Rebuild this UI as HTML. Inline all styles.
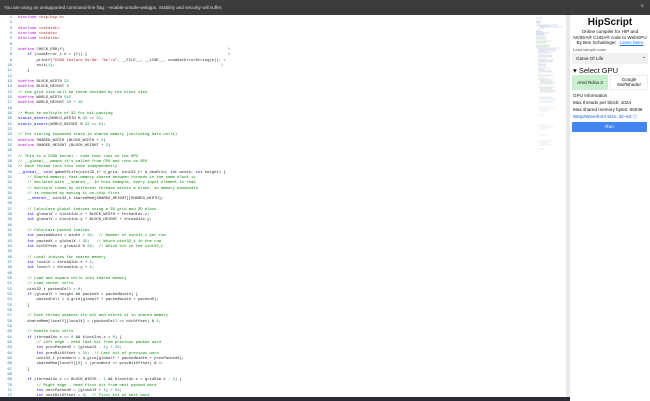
<!DOCTYPE html>
<html><head><style>
*{margin:0;padding:0;box-sizing:border-box}
body{width:650px;height:401px;overflow:hidden;background:#fff;font-family:"Liberation Sans",sans-serif;position:relative}
#top{position:absolute;left:0;top:0;width:650px;height:15px;background:#3c3c3c;color:#ddd;font-size:4.6px;line-height:15px;padding-left:4px}
#top .x{position:absolute;right:6px;top:0;color:#bbb;font-size:6px}
#ed{position:absolute;left:0;top:15px;width:566px;height:382px;background:#fff;overflow:hidden}
#code{position:absolute;left:0;top:1px;font-family:"Liberation Mono",monospace;font-size:3.85px;line-height:5.33px;white-space:pre;color:#222}
.ln{display:inline-block;width:12px;text-align:right;color:#237893;margin-right:6px}
.k{color:#0000ff}.c{color:#008000}.s{color:#a31515}.p{color:#af00db}.m{color:#098658}
#mm{position:absolute;left:535px;top:15px;width:30px;height:382px;opacity:.55}
#sb{position:absolute;left:566px;top:15px;width:4px;height:382px;background:#e8e8e8}
#bot{position:absolute;left:0;top:397px;width:570px;height:4px;background:#2b2b33}
#side{position:absolute;left:570px;top:15px;width:80px;height:386px;background:#fff;text-align:center;color:#111}
h1{font-size:10px;font-weight:bold;margin-top:2px;line-height:12px}
.sub{font-size:4.6px;line-height:5.6px}
.sub a{color:#1a73e8;text-decoration:underline}
.lbl{font-size:4px;color:#555;text-align:left;padding-left:3px;margin-top:1px}
.sel{margin:1px 2px 0 2px;height:11px;background:#f1f1f1;font-size:4.6px;line-height:11px;text-align:left;padding-left:4px;position:relative}
.sel:after{content:"⌄";position:absolute;right:2px;top:-1px;font-size:5px}
h2{font-size:7.5px;font-weight:normal;text-align:left;padding-left:3px;margin-top:2px;line-height:9px}
.btns{display:flex;gap:2px;margin:0 2px}
.btns div{height:15px;font-size:4.6px;display:flex;align-items:center;justify-content:center;line-height:5.5px}
.g{background:#c8f0cf;width:37px}
.w{background:#fff;width:39px;border:1px solid #eee}
.info{text-align:left;padding-left:3px;font-size:4.6px;line-height:7px;margin-top:2px}
.info .b{color:#1a5fd0}
.run{margin:2px 3px 0 2px;height:10px;background:#4285f4;color:#fff;font-size:4.6px;line-height:10px;border-radius:1px}
</style></head><body>
<div id="top">You are using an unsupported command-line flag: --enable-unsafe-webgpu. Stability and security will suffer.<span class="x">×</span></div>
<div id="ed"><div id="code"><span class="ln">1</span><span class="p">#include</span> <span class="s">&lt;hip/hip.h&gt;</span>
<span class="ln">2</span>
<span class="ln">3</span><span class="p">#include</span> <span class="s">&lt;cstdint&gt;</span>
<span class="ln">4</span><span class="p">#include</span> <span class="s">&lt;cstdio&gt;</span>
<span class="ln">5</span><span class="p">#include</span> <span class="s">&lt;cstdlib&gt;</span>
<span class="ln">6</span>
<span class="ln">7</span><span class="p">#define</span> CHECK_ERR(f)                                                                       \
<span class="ln">8</span>    <span class="k">if</span> (cudaError_t e = (f)) {                                                             \
<span class="ln">9</span>        printf(<span class="s">"CUDA failure %s:%d: '%s'\n"</span>, __FILE__, __LINE__, cudaGetErrorString(e)); \
<span class="ln">10</span>        exit(<span class="m">1</span>);                                                                        \
<span class="ln">11</span>    }
<span class="ln">12</span>
<span class="ln">13</span><span class="p">#define</span> BLOCK_WIDTH <span class="m">32</span>
<span class="ln">14</span><span class="p">#define</span> BLOCK_HEIGHT <span class="m">8</span>
<span class="ln">15</span><span class="c">// the grid size will be these divided by the block size</span>
<span class="ln">16</span><span class="p">#define</span> WORLD_WIDTH <span class="m">512</span>
<span class="ln">17</span><span class="p">#define</span> WORLD_HEIGHT <span class="m">32</span> * <span class="m">16</span>
<span class="ln">18</span>
<span class="ln">19</span><span class="c">// Must be multiple of 32 for bit-packing</span>
<span class="ln">20</span><span class="k">static_assert</span>(WORLD_WIDTH % <span class="m">32</span> == <span class="m">0</span>);
<span class="ln">21</span><span class="k">static_assert</span>(WORLD_HEIGHT % <span class="m">32</span> == <span class="m">0</span>);
<span class="ln">22</span>
<span class="ln">23</span><span class="c">// For storing expanded state in shared memory (including halo cells)</span>
<span class="ln">24</span><span class="p">#define</span> SHARED_WIDTH (BLOCK_WIDTH + <span class="m">2</span>)
<span class="ln">25</span><span class="p">#define</span> SHARED_HEIGHT (BLOCK_HEIGHT + <span class="m">2</span>)
<span class="ln">26</span>
<span class="ln">27</span><span class="c">// This is a CUDA kernel - code that runs on the GPU</span>
<span class="ln">28</span><span class="c">// __global__ means it's called from CPU and runs on GPU</span>
<span class="ln">29</span><span class="c">// Each thread runs this code independently</span>
<span class="ln">30</span><span class="k">__global__</span> <span class="k">void</span> gameOfLife(uint32_t* d_grid, uint32_t* d_newGrid, <span class="k">int</span> width, <span class="k">int</span> height) {
<span class="ln">31</span>    <span class="c">// Shared memory: fast memory shared between threads in the same block is</span>
<span class="ln">32</span>    <span class="c">// declared with __shared__. In this example, every input element is read</span>
<span class="ln">33</span>    <span class="c">// multiple times by different threads within a block, so memory bandwidth</span>
<span class="ln">34</span>    <span class="c">// is reduced by moving it on-chip first</span>
<span class="ln">35</span>    <span class="k">__shared__</span> uint32_t sharedMem[SHARED_HEIGHT][SHARED_WIDTH];
<span class="ln">36</span>
<span class="ln">37</span>    <span class="c">// Calculate global indices using a 2D grid and 2D block</span>
<span class="ln">38</span>    <span class="k">int</span> globalX = blockIdx.x * BLOCK_WIDTH + threadIdx.x;
<span class="ln">39</span>    <span class="k">int</span> globalY = blockIdx.y * BLOCK_HEIGHT + threadIdx.y;
<span class="ln">40</span>
<span class="ln">41</span>    <span class="c">// Calculate packed indices</span>
<span class="ln">42</span>    <span class="k">int</span> packedWidth = width / <span class="m">32</span>;  <span class="c">// Number of uint32_t per row</span>
<span class="ln">43</span>    <span class="k">int</span> packedX = globalX / <span class="m">32</span>;   <span class="c">// Which uint32_t in the row</span>
<span class="ln">44</span>    <span class="k">int</span> bitOffset = globalX % <span class="m">32</span>;  <span class="c">// Which bit in the uint32_t</span>
<span class="ln">45</span>
<span class="ln">46</span>    <span class="c">// Local indices for shared memory</span>
<span class="ln">47</span>    <span class="k">int</span> localX = threadIdx.x + <span class="m">1</span>;
<span class="ln">48</span>    <span class="k">int</span> localY = threadIdx.y + <span class="m">1</span>;
<span class="ln">49</span>
<span class="ln">50</span>    <span class="c">// Load and unpack cells into shared memory</span>
<span class="ln">51</span>    <span class="c">// Load center cells</span>
<span class="ln">52</span>    uint32_t packedCell = <span class="m">0</span>;
<span class="ln">53</span>    <span class="k">if</span> (globalY &lt; height &amp;&amp; packedX &lt; packedWidth) {
<span class="ln">54</span>        packedCell = d_grid[globalY * packedWidth + packedX];
<span class="ln">55</span>    }
<span class="ln">56</span>
<span class="ln">57</span>    <span class="c">// Each thread unpacks its bit and stores it in shared memory</span>
<span class="ln">58</span>    sharedMem[localY][localX] = (packedCell &gt;&gt; bitOffset) &amp; <span class="m">1</span>;
<span class="ln">59</span>
<span class="ln">60</span>    <span class="c">// Handle halo cells</span>
<span class="ln">61</span>    <span class="k">if</span> (threadIdx.x == <span class="m">0</span> &amp;&amp; blockIdx.x &gt; <span class="m">0</span>) {
<span class="ln">62</span>        <span class="c">// Left edge - need last bit from previous packed word</span>
<span class="ln">63</span>        <span class="k">int</span> prevPackedX = (globalX - <span class="m">1</span>) / <span class="m">32</span>;
<span class="ln">64</span>        <span class="k">int</span> prevBitOffset = <span class="m">31</span>;  <span class="c">// Last bit of previous word</span>
<span class="ln">65</span>        uint32_t prevWord = d_grid[globalY * packedWidth + prevPackedX];
<span class="ln">66</span>        sharedMem[localY][<span class="m">0</span>] = (prevWord &gt;&gt; prevBitOffset) &amp; <span class="m">1</span>;
<span class="ln">67</span>    }
<span class="ln">68</span>
<span class="ln">69</span>    <span class="k">if</span> (threadIdx.x == BLOCK_WIDTH - <span class="m">1</span> &amp;&amp; blockIdx.x &lt; gridDim.x - <span class="m">1</span>) {
<span class="ln">70</span>        <span class="c">// Right edge - need first bit from next packed word</span>
<span class="ln">71</span>        <span class="k">int</span> nextPackedX = (globalX + <span class="m">1</span>) / <span class="m">32</span>;
<span class="ln">72</span>        <span class="k">int</span> nextBitOffset = <span class="m">0</span>;  <span class="c">// First bit of next word</span>
<span class="ln">73</span>        uint32_t nextWord = d_grid[globalY * packedWidth + nextPackedX];
</div></div>
<svg id="mm" width="30" height="382" viewBox="0 0 30 382">
<g stroke-width="0.6">
<path d="M1 3h6M1 6h4M1 7h5M1 8h5M1 10h22M3 11h12M5 12h22M5 13h4M3 14h2M1 16h7M1 17h7M1 18h13M1 19h8M1 20h9" stroke="#7d8fbf"/>
<path d="M1 22h9M1 23h10M1 24h11M1 26h16M1 27h10M1 28h10M1 30h14M1 31h14M1 32h11" stroke="#8fbf8a"/>
<path d="M1 33h24M3 34h18M3 35h18M3 36h19M3 37h10M3 38h15M3 40h14M3 41h14M3 42h14M3 44h8M3 45h16M3 46h15M3 47h15M3 49h9M3 50h8M3 51h8M3 53h12M3 54h6M3 55h7M3 56h14M5 57h14M3 58h2" stroke="#9aa8c8"/>
<path d="M3 60h15M3 61h13M3 63h6M3 64h12M5 65h14M5 66h11M5 67h13M5 68h16M5 69h14M3 70h2M3 72h18M5 73h14M5 74h11M5 75h13M5 76h16M5 77h14M3 78h2" stroke="#a8b8a8"/>
<path d="M3 82h14M3 83h15M5 84h16M5 86h12M5 87h14M3 89h2M3 92h14M5 94h15M5 96h10M3 100h6M3 110h12M5 112h14M5 114h9M3 120h10M3 126h14M5 128h8M5 130h12M3 134h6" stroke="#b5bfd0"/>
</g></svg>
<div id="sb"></div>
<div id="bot"></div>
<div id="side">
<h1>HipScript</h1>
<div class="sub">Online compiler for HIP and<br>NVIDIA® CUDA® code to WebGPU<br>By Ben Schattinger · <a>Learn More</a></div>
<div class="lbl">Load sample code:</div>
<div class="sel">Game Of Life</div>
<h2>▾ Select GPU</h2>
<div class="btns"><div class="g">Amd Rdna 3</div><div class="w">Google<br>Swiftshader</div></div>
<div class="info">GPU Information<br>Max threads per block: 1024<br>Max shared memory bytes: 65536<br><span class="b">Warp/Wavefront Size: 32–64 ⓘ</span></div>
<div class="run">Run</div>
</div>
</body></html>
